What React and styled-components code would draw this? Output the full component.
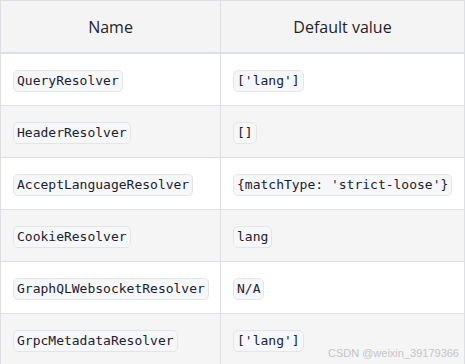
import React from "react";
import styled, { createGlobalStyle } from "styled-components";

const Global = createGlobalStyle`
  html, body { margin: 0; padding: 0; background: #ffffff; }
  body { width: 465px; height: 364px; overflow: hidden; }
`;

const Wrap = styled.div`
  position: relative;
  width: 465px;
  height: 364px;
`;

const Table = styled.table`
  border-collapse: collapse;
  width: 464px;
  table-layout: fixed;
  font-family: "Open Sans", "Noto Sans", sans-serif;
  color: #1f2328;
`;

const Col = styled.col`
  width: ${(p) => p.$w}px;
`;

const Th = styled.th`
  height: 51px;
  padding: 0 12px;
  background: #f4f4f5;
  border: 1px solid #dcdfe3;
  border-bottom: 2px solid #dcdfe3;
  font-size: 16px;
  font-weight: 400;
  text-align: center;
`;

const Tr = styled.tr`
  background: ${(p) => (p.$alt ? "#f5f5f6" : "#ffffff")};
`;

const Td = styled.td`
  height: 51px;
  padding: 0 12px;
  border: 1px solid #dcdfe3;
  text-align: left;
  vertical-align: middle;
  white-space: nowrap;
`;

const Code = styled.code`
  display: inline-block;
  font-family: "DejaVu Sans Mono", "Liberation Mono", monospace;
  font-size: 13px;
  line-height: 20px;
  padding: 0 3px;
  background: #f6f7f9;
  border: 1px solid #e3e5e8;
  border-radius: 5px;
  color: #1a2030;
`;

const Watermark = styled.div`
  position: absolute;
  right: 6px;
  bottom: 5px;
  font-family: "Liberation Sans", Arial, sans-serif;
  font-size: 11px;
  color: #c4c4c4;
`;

const rows = [
  ["QueryResolver", "['lang']"],
  ["HeaderResolver", "[]"],
  ["AcceptLanguageResolver", "{matchType: 'strict-loose'}"],
  ["CookieResolver", "lang"],
  ["GraphQLWebsocketResolver", "N/A"],
  ["GrpcMetadataResolver", "['lang']"],
];

export default function App() {
  return (
    <Wrap>
      <Global />
      <Table>
        <colgroup>
          <Col $w={220} />
          <Col $w={244} />
        </colgroup>
        <thead>
          <tr>
            <Th>Name</Th>
            <Th>Default value</Th>
          </tr>
        </thead>
        <tbody>
          {rows.map(([n, v], i) => (
            <Tr key={n} $alt={i % 2 === 1}>
              <Td>
                <Code>{n}</Code>
              </Td>
              <Td>
                <Code>{v}</Code>
              </Td>
            </Tr>
          ))}
        </tbody>
      </Table>
      <Watermark>CSDN @weixin_39179366</Watermark>
    </Wrap>
  );
}
